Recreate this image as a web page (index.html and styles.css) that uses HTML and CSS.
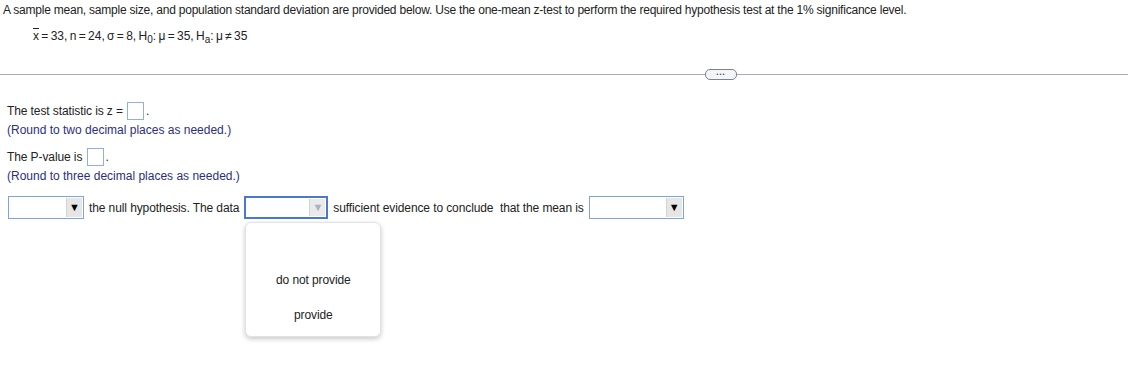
FILE: index.html
```html
<!DOCTYPE html>
<html lang="en">
<head>
    <meta charset="UTF-8">
    <title>One-mean z-test</title>
    <link rel="stylesheet" href="styles.css">
</head>
<body>
    <div class="question">
        <p class="intro">A sample mean, sample size, and population standard deviation are provided below. Use the one-mean z-test to perform the required hypothesis test at the 1% significance level.</p>
        <p class="givens"><span class="xbar">x</span> = 33, n = 24, σ = 8, H<sub>0</sub>: μ = 35, H<sub>a</sub>: μ ≠ 35</p>
    </div>

    <div class="divider">
        <span class="more">•••</span>
    </div>

    <div class="answers">
        <p class="line">The test statistic is z = <span class="blank"></span>.</p>
        <p class="hint">(Round to two decimal places as needed.)</p>

        <p class="line gap">The P-value is <span class="blank"></span>.</p>
        <p class="hint">(Round to three decimal places as needed.)</p>

        <div class="sentence">
            <div class="select first"><span class="arrow">▼</span></div>
            <span>the null hypothesis. The data</span>
            <div class="dropdown">
                <div class="select second"><span class="arrow off">▼</span></div>
                <div class="option-list">
                    <div class="item">do not provide</div>
                    <div class="item">provide</div>
                </div>
            </div>
            <span>sufficient evidence to conclude&nbsp; that the mean is</span>
            <div class="select third"><span class="arrow">▼</span></div>
        </div>
    </div>
</body>
</html>
```

FILE: styles.css
```css
* {
    font-family: "Liberation Sans", Arial, Helvetica, sans-serif;
}

body {
    margin: 0;
    min-height: 387px;
    font-size: 12px;
    color: #222;
    background-color: #fff;
}

p {
    margin: 0;
}

.question {
    padding: 3px 0 0 3px;
}

.intro {
    line-height: 14px;
    letter-spacing: -0.22px;
}

.givens {
    margin-top: 12px;
    padding-left: 30px;
    line-height: 14px;
    word-spacing: -1px;
}

.xbar {
    text-decoration: overline;
}

sub {
    font-size: 10px;
    line-height: 0;
}

.divider {
    margin-top: 31px;
    height: 1px;
    background-color: #a9adb8;
    position: relative;
}

.more {
    position: absolute;
    left: 705px;
    top: -5px;
    width: 30px;
    height: 9px;
    border: 1px solid #7d8290;
    border-radius: 5px;
    background-color: #f4f5f8;
    font-size: 6px;
    line-height: 9px;
    letter-spacing: 1px;
    text-align: center;
    color: #555a66;
}

.answers {
    padding: 27px 0 0 7px;
}

.line {
    line-height: 19px;
    height: 19px;
    letter-spacing: -0.1px;
}

.line.gap {
    margin-top: 9px;
}

.blank {
    display: inline-block;
    width: 15px;
    height: 16px;
    border: 1px solid #8fb0e0;
    background-color: #fff;
    vertical-align: middle;
    margin: -2px 2px 0 1px;
}

.hint {
    color: #2b2f7e;
    line-height: 18px;
}

.sentence {
    display: flex;
    align-items: center;
    gap: 5px;
    margin-top: 11px;
    margin-left: 1px;
    letter-spacing: -0.1px;
}

.select {
    display: flex;
    justify-content: flex-end;
    align-items: center;
    height: 23px;
    border: 1px solid #7ea4e0;
    background-color: #fff;
    padding-right: 1px;
    box-sizing: border-box;
}

.select.first {
    width: 76px;
}

.select.third {
    width: 95px;
}

.dropdown {
    position: relative;
}

.select.second {
    width: 84px;
    border: 2px solid #4a78d0;
}

.arrow {
    width: 15px;
    height: 19px;
    background-color: #e6e6e6;
    border-left: 1px solid #d2d2d2;
    font-size: 11px;
    line-height: 19px;
    text-align: center;
    color: #000;
}

.arrow.off {
    height: 17px;
    line-height: 17px;
    color: #a9b3c4;
    background-color: #eaeaea;
}

.option-list {
    position: absolute;
    left: 1px;
    top: 26px;
    width: 136px;
    height: 115px;
    background-color: #fff;
    border: 1px solid #e3e3e3;
    border-radius: 6px;
    box-shadow: 0 2px 5px rgba(0, 0, 0, 0.22);
    display: flex;
    flex-direction: column;
    align-items: center;
    padding-top: 50px;
    box-sizing: border-box;
    gap: 21px;
    z-index: 2;
}

.item {
    font-size: 12px;
    color: #222;
    line-height: 14px;
}
```
